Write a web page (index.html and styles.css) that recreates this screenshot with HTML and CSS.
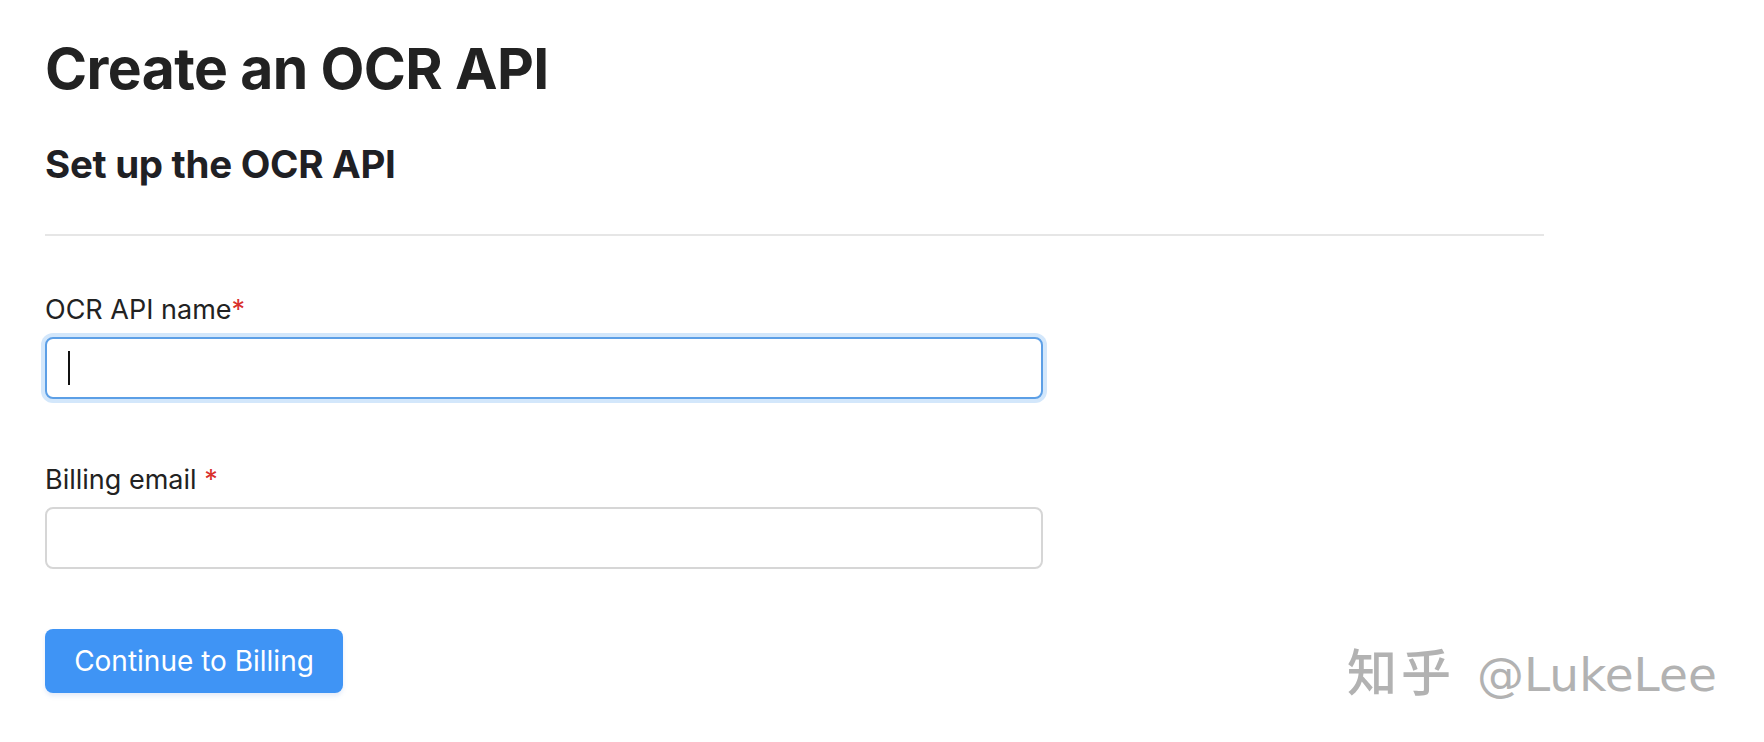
FILE: index.html
```html
<!DOCTYPE html>
<html lang="en">
<head>
<meta charset="utf-8">
<title>Create an OCR API</title>
<link rel="stylesheet" href="styles.css">
</head>
<body>
<main class="page">
  <h1 class="title">Create an OCR API</h1>
  <h2 class="subtitle">Set up the OCR API</h2>
  <hr class="divider">
  <form class="form">
    <div class="field">
      <label class="label">OCR API name<span class="req">*</span></label>
      <div class="input input-focus"><span class="caret"></span></div>
    </div>
    <div class="field">
      <label class="label">Billing email <span class="req">*</span></label>
      <div class="input"></div>
    </div>
    <button type="button" class="btn">Continue to Billing</button>
  </form>
</main>
<div class="watermark"><span class="wm-cjk">知乎</span><span class="wm-latin">@LukeLee</span></div>
</body>
</html>
```
FILE: styles.css
```css
html, body {
  margin: 0;
  padding: 0;
  background: #ffffff;
}
body {
  font-family: Inter, "Noto Sans", "Liberation Sans", sans-serif;
  color: #222326;
  width: 1764px;
  height: 742px;
  overflow: hidden;
  position: relative;
}
.page {
  padding: 35px 0 0 45px;
  display: flex;
  flex-direction: column;
}
.title {
  margin: 0;
  font-size: 57px;
  line-height: 68px;
  font-weight: 700;
  letter-spacing: -0.6px;
  color: #222222;
}
.subtitle {
  margin: 37px 0 0 0;
  font-size: 38.5px;
  line-height: 48px;
  font-weight: 700;
  letter-spacing: -0.3px;
  color: #1f2024;
}
.divider {
  margin: 46px 0 0 0;
  width: 1499px;
  height: 2px;
  border: 0;
  background: #e6e6e6;
}
.form {
  display: flex;
  flex-direction: column;
  margin-top: 58px;
}
.field {
  display: flex;
  flex-direction: column;
  gap: 11px;
  margin-bottom: 65px;
}
.field + .field {
  margin-bottom: 60px;
}
.label {
  font-size: 27px;
  line-height: 32px;
  color: #222222;
}
.req {
  color: #d9302c;
}
.input {
  box-sizing: border-box;
  width: 998px;
  height: 62px;
  border: 2px solid #d6d6d6;
  border-radius: 8px;
  padding: 0 21px;
  display: flex;
  align-items: center;
  background: #fff;
}
.input-focus {
  border-color: #5c9fe6;
  box-shadow: 0 0 0 4px #d3e7fb;
}
.caret {
  width: 2px;
  height: 34px;
  background: #111;
}
.btn {
  align-self: flex-start;
  box-sizing: border-box;
  width: 298px;
  height: 64px;
  border: 0;
  border-radius: 8px;
  background: #3f94f5;
  color: #ffffff;
  font-family: Inter, "Noto Sans", "Liberation Sans", sans-serif;
  font-size: 28px;
  font-weight: 400;
  padding: 0;
  box-shadow: 0 3px 4px rgba(150, 180, 230, 0.25);
}
.watermark {
  position: absolute;
  left: 1347px;
  top: 638px;
  color: #b2b2b2;
  line-height: 62px;
  white-space: nowrap;
  display: flex;
  align-items: baseline;
  gap: 22px;
  text-shadow: 2px 2px 0 rgba(255, 255, 255, 0.6);
}
.wm-cjk {
  font-family: "Noto Sans CJK SC", sans-serif;
  font-size: 50px;
  letter-spacing: 4px;
  font-weight: 500;
}
.wm-latin {
  font-family: "DejaVu Sans", sans-serif;
  font-size: 47px;
  letter-spacing: 0;
}
```
